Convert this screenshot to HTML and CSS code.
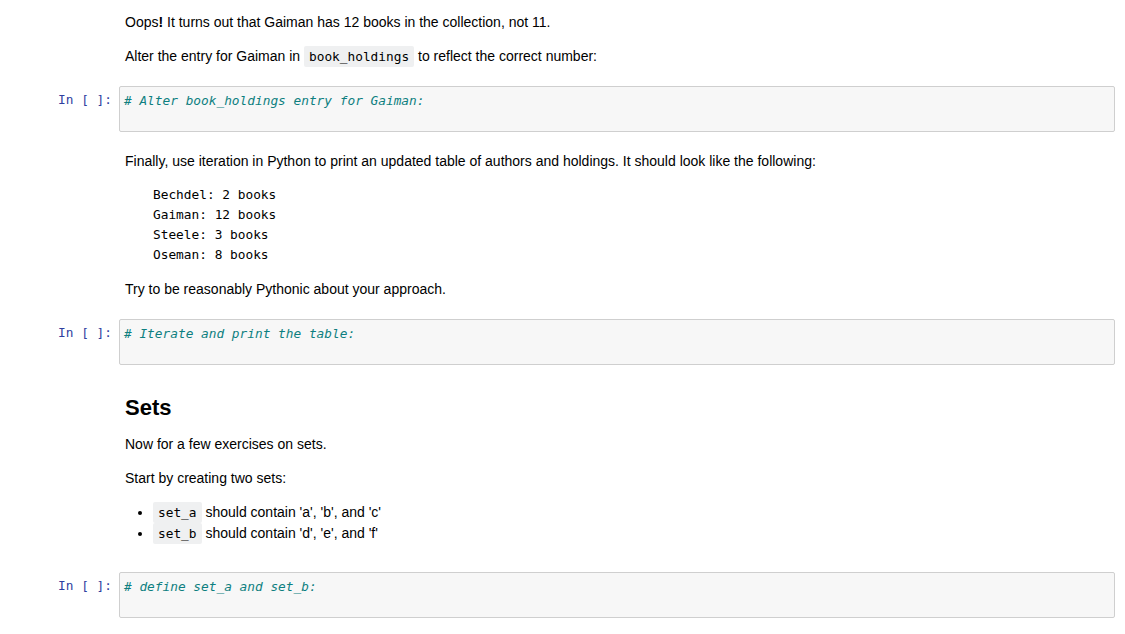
FILE: index.html
```html
<!DOCTYPE html>
<html lang="en">
<head>
<meta charset="utf-8">
<title>Notebook</title>
<link rel="stylesheet" href="styles.css">
</head>
<body>
<div class="notebook">
  <div class="cell">
    <div class="prompt"></div>
    <div class="md">
      <p>Oops<strong>!</strong> It turns out that Gaiman has 12 books in the collection, not 11.</p>
      <p class="next">Alter the entry for Gaiman in <code>book_holdings</code> to reflect the correct number:</p>
    </div>
  </div>
  <div class="cell">
    <div class="prompt in">In&nbsp;[&nbsp;]:</div>
    <div class="input"><span class="comment"># Alter book_holdings entry for Gaiman:</span></div>
  </div>
  <div class="cell">
    <div class="prompt"></div>
    <div class="md">
      <p>Finally, use iteration in Python to print an updated table of authors and holdings. It should look like the following:</p>
<pre class="table">Bechdel: 2 books
Gaiman: 12 books
Steele: 3 books
Oseman: 8 books</pre>
      <p class="after-pre">Try to be reasonably Pythonic about your approach.</p>
    </div>
  </div>
  <div class="cell">
    <div class="prompt in">In&nbsp;[&nbsp;]:</div>
    <div class="input"><span class="comment"># Iterate and print the table:</span></div>
  </div>
  <div class="cell heading-cell">
    <div class="prompt"></div>
    <div class="md">
      <h2>Sets</h2>
      <p class="after-h">Now for a few exercises on sets.</p>
      <p class="next">Start by creating two sets:</p>
      <ul>
        <li><code>set_a</code> should contain 'a', 'b', and 'c'</li>
        <li><code>set_b</code> should contain 'd', 'e', and 'f'</li>
      </ul>
    </div>
  </div>
  <div class="cell">
    <div class="prompt in">In&nbsp;[&nbsp;]:</div>
    <div class="input"><span class="comment"># define set_a and set_b:</span></div>
  </div>
</div>
</body>
</html>
```
FILE: styles.css
```css
html, body {
  margin: 0;
  padding: 0;
  background: #ffffff;
}

body {
  font-family: "Liberation Sans", Arial, Helvetica, sans-serif;
  font-size: 14px;
  color: #000000;
}

.notebook {
  display: flex;
  flex-direction: column;
  gap: 20px;
  padding: 13px 10px 0 0;
}

.cell {
  display: flex;
  flex-direction: row;
  align-items: flex-start;
}

.prompt {
  flex: 0 0 112px;
  width: 112px;
  padding-right: 7px;
  text-align: right;
  font-family: "DejaVu Sans Mono", "Liberation Mono", monospace;
  font-size: 12.8px;
  line-height: 17px;
  color: #303f9f;
}

.prompt.in {
  padding-top: 5px;
}

.input {
  flex: 1 1 auto;
  min-width: 0;
  height: 44px;
  box-sizing: content-box;
  background: #f7f7f7;
  border: 1px solid #cfcfcf;
  border-radius: 2px;
  padding: 0;
  display: flex;
  align-items: flex-start;
}

.comment {
  display: block;
  padding: 5px 0 0 4px;
  font-family: "DejaVu Sans Mono", "Liberation Mono", monospace;
  font-size: 12.8px;
  line-height: 17px;
  font-style: italic;
  color: #0e7f80;
}

.md {
  flex: 1 1 auto;
  padding-left: 6px;
}

.md p {
  margin: 0;
  line-height: 19px;
}

.md p.next {
  margin-top: 15px;
}

.md strong {
  font-weight: bold;
}

.md code {
  font-family: "DejaVu Sans Mono", "Liberation Mono", monospace;
  font-size: 12.8px;
  background: #eff0f1;
  padding: 3px 5px;
  border-radius: 2px;
}

.table {
  margin: 14px 0 0 28px;
  font-family: "DejaVu Sans Mono", "Liberation Mono", monospace;
  font-size: 12.8px;
  line-height: 20px;
  color: #000000;
}

.md p.after-pre {
  margin-top: 15px;
}

.heading-cell {
  margin-top: 10px;
}

.md h2 {
  margin: 0;
  font-size: 22px;
  line-height: 26px;
  font-weight: bold;
}

.md p.after-h {
  margin-top: 14px;
}

.md ul {
  margin: 14px 0 8px 0;
  padding-left: 28px;
}

.md li {
  line-height: 21px;
  height: 21px;
}
```
